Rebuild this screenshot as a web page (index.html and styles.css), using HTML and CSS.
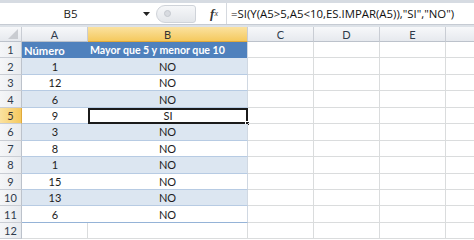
FILE: index.html
```html
<!DOCTYPE html>
<html>
<head>
<meta charset="utf-8">
<link rel="stylesheet" href="styles.css">
</head>
<body>
<div class="app">
  <div class="topstrip"></div>
  <div class="fbar">
    <div class="namebox">B5</div>
    <div class="nbarrow"><svg width="7" height="4" viewBox="0 0 7 4"><path d="M0 0h7L3.5 4z" fill="#222"/></svg></div>
    <div class="splitter"><div class="pill"><span class="pilldot"></span></div></div>
    <div class="fx"><i>f</i><sub>x</sub></div>
    <div class="formula">=SI(Y(A5&gt;5,A5&lt;10,ES.IMPAR(A5)),"SI","NO")</div>
  </div>
  <div class="gap"></div>
  <div class="sheet">
    <div class="ch corner"><svg width="10" height="10" viewBox="0 0 10 10"><path d="M10 0V10H0z" fill="#c9ccd1"/></svg></div>
    <div class="ch">A</div><div class="ch sel">B</div><div class="ch">C</div><div class="ch">D</div><div class="ch">E</div><div class="ch last"></div>

    <div class="rh">1</div><div class="c hdr t">Número</div><div class="c hdr t narrow">Mayor que 5 y menor que 10</div><div class="c g"></div><div class="c g"></div><div class="c g"></div><div class="c g last"></div>
    <div class="rh">2</div><div class="c band">1</div><div class="c band">NO</div><div class="c g"></div><div class="c g"></div><div class="c g"></div><div class="c g last"></div>
    <div class="rh">3</div><div class="c plain">12</div><div class="c plain">NO</div><div class="c g"></div><div class="c g"></div><div class="c g"></div><div class="c g last"></div>
    <div class="rh">4</div><div class="c band">6</div><div class="c band">NO</div><div class="c g"></div><div class="c g"></div><div class="c g"></div><div class="c g last"></div>
    <div class="rh sel">5</div><div class="c plain">9</div><div class="c plain active">SI<span class="handle"></span></div><div class="c g"></div><div class="c g"></div><div class="c g"></div><div class="c g last"></div>
    <div class="rh">6</div><div class="c band">3</div><div class="c band">NO</div><div class="c g"></div><div class="c g"></div><div class="c g"></div><div class="c g last"></div>
    <div class="rh">7</div><div class="c plain">8</div><div class="c plain">NO</div><div class="c g"></div><div class="c g"></div><div class="c g"></div><div class="c g last"></div>
    <div class="rh">8</div><div class="c band">1</div><div class="c band">NO</div><div class="c g"></div><div class="c g"></div><div class="c g"></div><div class="c g last"></div>
    <div class="rh">9</div><div class="c plain">15</div><div class="c plain">NO</div><div class="c g"></div><div class="c g"></div><div class="c g"></div><div class="c g last"></div>
    <div class="rh">10</div><div class="c band">13</div><div class="c band">NO</div><div class="c g"></div><div class="c g"></div><div class="c g"></div><div class="c g last"></div>
    <div class="rh">11</div><div class="c plain lastrow">6</div><div class="c plain lastrow">NO</div><div class="c g"></div><div class="c g"></div><div class="c g"></div><div class="c g last"></div>
    <div class="rh">12</div><div class="c g"></div><div class="c g"></div><div class="c g"></div><div class="c g"></div><div class="c g"></div><div class="c g last"></div>
  </div>
</div>
</body>
</html>
```
FILE: styles.css
```css
* { box-sizing: border-box; }
html, body { margin: 0; padding: 0; }
body { width: 474px; height: 240px; overflow: hidden; background: #fff; font-family: "Lato", "Open Sans", sans-serif; }
.app { display: flex; flex-direction: column; width: 474px; height: 240px; }
.topstrip { height: 3px; background: #d6dbe2; }
.fbar { height: 22px; display: flex; align-items: stretch; background: #fff; border-bottom: 1px solid #c6cbd3; }
.namebox { width: 141px; display: flex; align-items: center; justify-content: center; font-family: "Open Sans", sans-serif; font-size: 11.5px; color: #1a1a1a; }
.nbarrow { width: 11px; display: flex; align-items: center; justify-content: center; }
.splitter { width: 50px; display: flex; align-items: center; padding-left: 4px; }
.pill { width: 40px; height: 18px; border-radius: 9px 3px 3px 9px; border: 1px solid #cfd3d9; background: linear-gradient(#f6f7f9, #e3e6ea); display: flex; align-items: center; padding-left: 7px; }
.pilldot { width: 7px; height: 7px; border-radius: 50%; background: #d8dbe0; border: 1px solid #c4c8ce; }
.fx { width: 24px; display: flex; align-items: center; justify-content: center; font-family: "Liberation Serif", serif; font-size: 13px; color: #333; }
.fx i { font-weight: bold; }
.fx sub { font-size: 8px; font-style: italic; vertical-align: -2px; }
.formula { flex: 1; display: flex; align-items: center; padding-left: 4px; border-left: 1px solid #d5d9df; font-family: "Open Sans", sans-serif; font-size: 11.4px; color: #111; white-space: nowrap; overflow: hidden; }
.gap { height: 2px; background: #dde2e8; }
.sheet { flex: 1; display: grid; grid-template-columns: 22px 66px 160px 66px 66px 66px 28px; grid-template-rows: 15px repeat(12, 16.45px); overflow: hidden; font-size: 11px; color: #1c1c1c; }
.ch { background: linear-gradient(#f7f8fa, #e6e9ee); border-right: 1px solid #c9cdd4; border-bottom: 1px solid #bcc2cb; display: flex; align-items: center; justify-content: center; color: #2f3b4c; font-family: "Lato", sans-serif; font-size: 11px; }
.ch.sel { background: linear-gradient(#fbe2a0, #f5c95e); border-bottom-color: #e0a93c; color: #333; }
.ch.corner { justify-content: flex-end; align-items: flex-end; padding: 0 3px 2px 0; }
.ch.last { border-right: none; }
.rh { background: linear-gradient(90deg, #f5f6f8, #e8ebef); border-right: 1px solid #bcc2cb; border-bottom: 1px solid #c9cdd4; display: flex; align-items: center; justify-content: center; color: #2f3b4c; font-size: 11px; }
.rh.sel { background: linear-gradient(90deg, #fbe2a0, #f5c95e); border-right-color: #e0a93c; color: #333; }
.c { display: flex; align-items: center; justify-content: center; position: relative; }
.g { border-right: 1px solid #dadcdd; border-bottom: 1px solid #dadcdd; }
.g.last { border-right: none; }
.hdr { background: #4f81bd; color: #fff; font-weight: bold; font-size: 11.2px; }
.hdr.t { justify-content: flex-start; padding-left: 2px; }
.hdr.narrow { font-size: 10.6px; }
.band { background: #dce6f1; border-bottom: 1px solid #b7cbe3; }
.plain { background: #fff; border-bottom: 1px solid #b7cbe3; }
.c:nth-child(7n+3).band, .c:nth-child(7n+3).plain, .c:nth-child(7n+3).hdr { border-right: 1px solid #d0d8e2; }
.lastrow { border-bottom-color: #95b3d7; }
.active { border: 2px solid #1b1b1b !important; }
.handle { position: absolute; right: -4px; bottom: -4px; width: 5px; height: 5px; background: #1b1b1b; border: 1px solid #fff; }
```
